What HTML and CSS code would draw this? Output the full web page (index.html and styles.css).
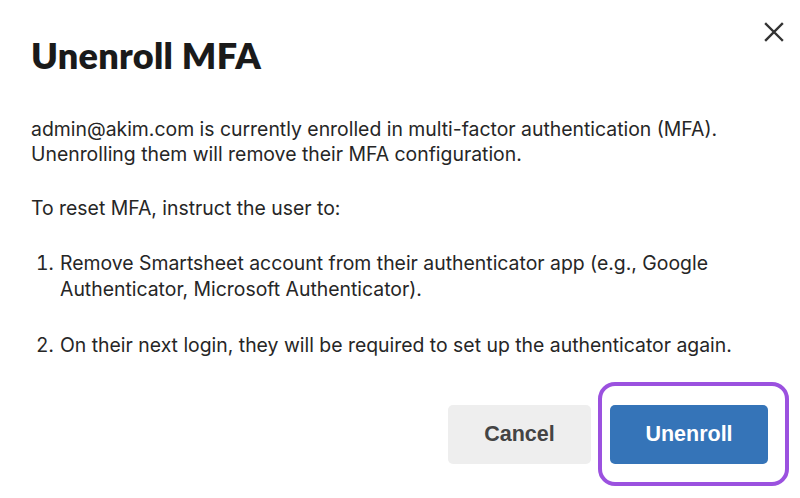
FILE: index.html
```html
<!DOCTYPE html>
<html lang="en">
<head>
    <meta charset="UTF-8">
    <title>Unenroll MFA</title>
    <link rel="stylesheet" href="styles.css">
</head>
<body>
<div class="modal">
    <button class="close-button" aria-label="Close">
        <svg width="20" height="20" viewBox="0 0 20 20">
            <path d="M2 2 L18 18 M18 2 L2 18" stroke="#333333" stroke-width="2.4" stroke-linecap="square" fill="none"/>
        </svg>
    </button>
    <h1 class="modal-title">Unenroll MFA</h1>
    <div class="modal-body">
        <p>admin@akim.com is currently enrolled in multi-factor authentication (MFA). Unenrolling them will remove their MFA configuration.</p>
        <p>To reset MFA, instruct the user to:</p>
        <ol class="steps">
            <li>Remove Smartsheet account from their authenticator app (e.g., Google Authenticator, Microsoft Authenticator).</li>
            <li>On their next login, they will be required to set up the authenticator again.</li>
        </ol>
    </div>
    <div class="modal-footer">
        <button class="btn btn-secondary">Cancel</button>
        <div class="primary-wrap">
            <button class="btn btn-primary">Unenroll</button>
            <div class="focus-ring"></div>
        </div>
    </div>
</div>
</body>
</html>
```

FILE: styles.css
```css
/* Modal styles */
body {
    margin: 0;
    width: 800px;
    height: 498px;
    background: #FFFFFF;
    overflow: hidden;
}

.modal {
    position: relative;
    box-sizing: border-box;
    width: 800px;
    height: 498px;
    padding: 33px 32px 0 31px;
    color: #222222;
}

.close-button {
    position: absolute;
    top: 22px;
    right: 16px;
    width: 20px;
    height: 20px;
    padding: 0;
    background: none;
    border: none;
    cursor: pointer;
}

.close-button svg {
    display: block;
}

.modal-title {
    margin: 0;
    font-family: 'Lato', sans-serif;
    font-size: 36px;
    font-weight: 800;
    line-height: 44px;
    color: #1a1a1a;
    letter-spacing: 0.3px;
}

.modal-body {
    margin-top: 40px;
    font-family: 'Inter', sans-serif;
    font-size: 19.4px;
    line-height: 25px;
    color: #262626;
}

.modal-body p {
    margin: 0 0 29px 0;
}

.steps {
    margin: 2px 0 0 0;
    padding-left: 28px;
    line-height: 26px;
}

.steps li {
    margin-bottom: 30px;
    padding-left: 1px;
}

.steps li:last-child {
    margin-bottom: 0;
}

.modal-footer {
    display: flex;
    justify-content: flex-end;
    align-items: center;
    gap: 19px;
    margin-top: 47px;
}

.btn {
    height: 59px;
    border: none;
    border-radius: 5px;
    font-family: 'Liberation Sans', Arial, sans-serif;
    font-size: 21.5px;
    font-weight: 700;
    cursor: pointer;
}

.btn-secondary {
    width: 143px;
    background: #EEEEEE;
    color: #444444;
}

.primary-wrap {
    position: relative;
}

.btn-primary {
    display: block;
    width: 158px;
    background: #3574B8;
    color: #FFFFFF;
}

/* highlight drawn around the primary action */
.focus-ring {
    position: absolute;
    top: -23px;
    right: -21px;
    bottom: -22px;
    left: -12px;
    border: 4px solid #9B51DF;
    border-radius: 17px;
    pointer-events: none;
}
```
